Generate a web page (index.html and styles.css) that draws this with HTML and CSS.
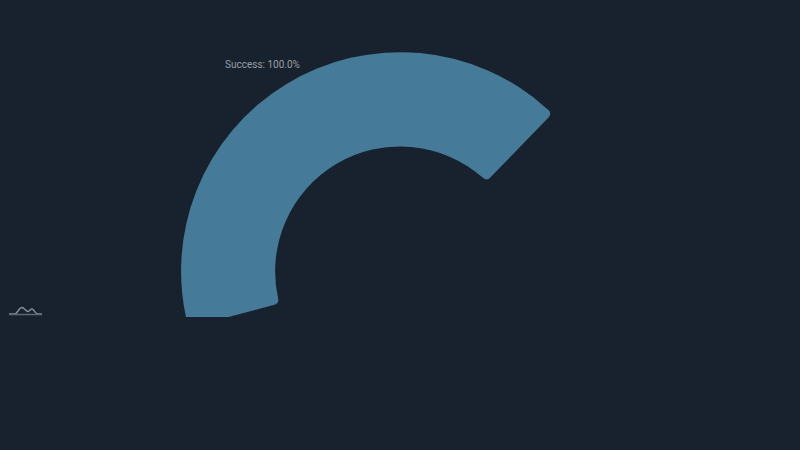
FILE: index.html
```html
<!DOCTYPE html>
<html lang="en">
<head>
    <meta charset="UTF-8">
    <title>Success rate</title>
    <link rel="stylesheet" href="styles.css">
</head>
<body>
    <div class="chart">
        <svg class="gauge" width="800" height="317" viewBox="0 0 800 317">
            <path class="gauge-arc" d="M546.6 108.4 A219 219 0 0 0 188.5 327.7 L274.5 304.7 Q279.3 303.4 278.1 298.5 A125 125 0 0 1 482 177 Q486.5 181.6 490.3 177.6 L548.5 117.5 Q552.8 112.5 546.6 108.4 Z"/>
        </svg>
        <span class="gauge-label">Success: 100.0%</span>
        <svg class="spark" width="33" height="11" viewBox="0 0 33 11">
            <path class="spark-line" d="M0 9 H6 C8 9 10 2.5 13 2.5 C15 2.5 17 6.5 19 6.5 C20.5 6.5 21.5 4 23 4 C25 4 26 9 29 9 H33"/>
            <path class="spark-base" d="M0 9.5 H33"/>
        </svg>
    </div>
</body>
</html>
```

FILE: styles.css
```css
* {
    box-sizing: border-box;
    margin: 0;
    padding: 0;
}

body {
    background-color: #18222e;
    overflow: hidden;
}

.chart {
    position: relative;
    width: 800px;
    height: 450px;
}

.gauge {
    display: block;
}

.gauge-arc {
    fill: #467a99;
}

.gauge-label {
    position: absolute;
    left: 225px;
    top: 58px;
    font-family: Roboto, sans-serif;
    font-size: 10px;
    line-height: 14px;
    color: #989ea5;
}

.spark {
    position: absolute;
    left: 9px;
    top: 304.5px;
}

.spark-line {
    fill: none;
    stroke: #868e98;
    stroke-width: 1.4;
}

.spark-base {
    fill: none;
    stroke: #5d6773;
    stroke-width: 1.4;
}
```
